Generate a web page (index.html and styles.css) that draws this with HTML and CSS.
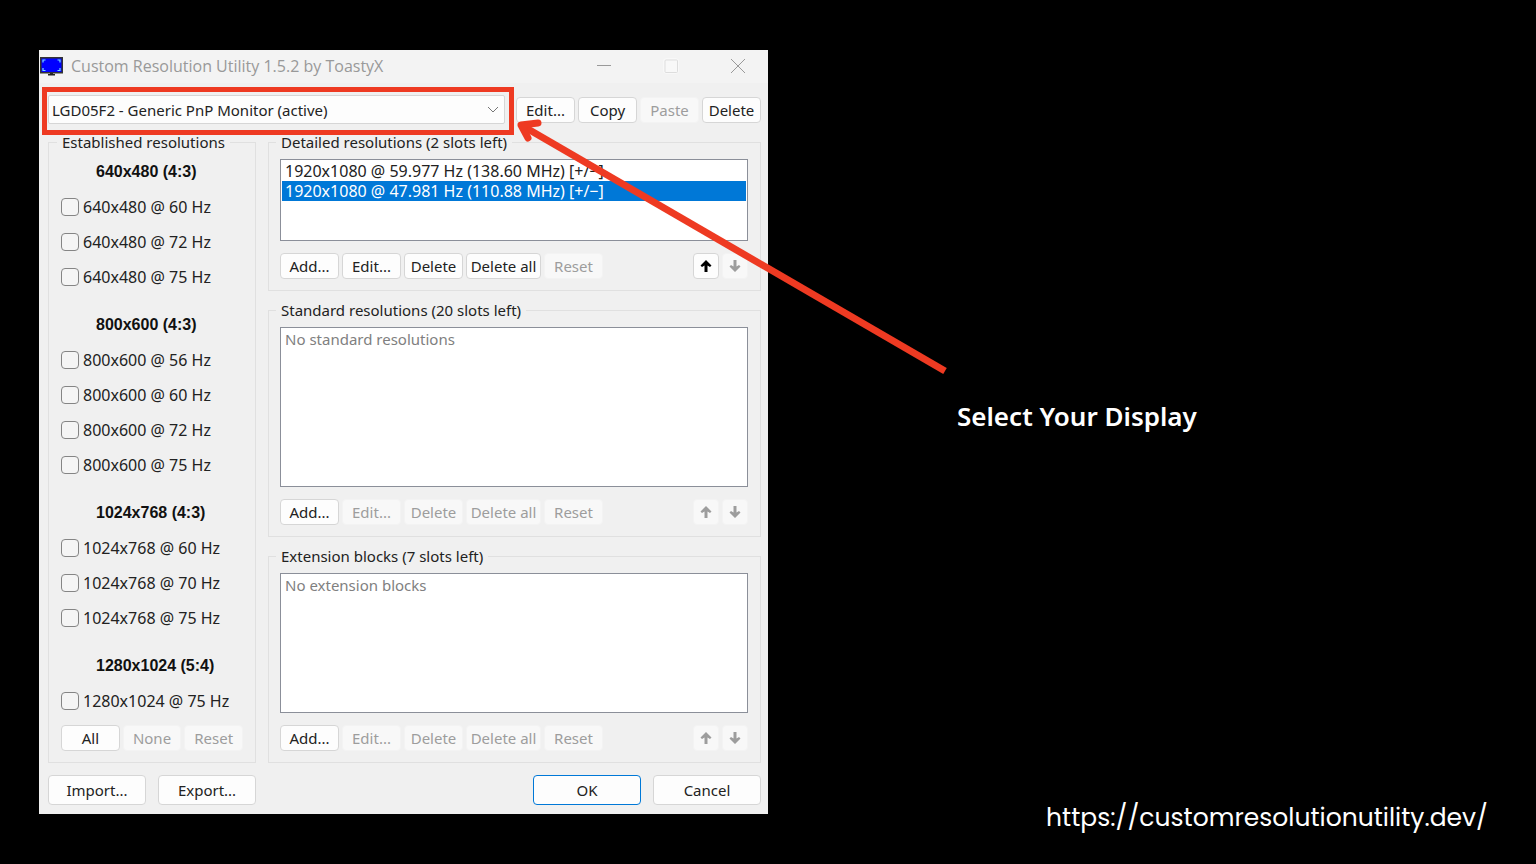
FILE: index.html
```html
<!DOCTYPE html>
<html lang="en">
<head>
    <meta charset="UTF-8">
    <meta name="viewport" content="width=device-width, initial-scale=1.0">
    <title>Custom Resolution Utility</title>
    <link rel="stylesheet" href="styles.css">
</head>
<body>
    <svg class="sprite" width="0" height="0" aria-hidden="true">
        <symbol id="icon-up" viewBox="0 0 12 14">
            <path d="M6 1 L11.500 6.500 L10 8 L7.500 6.500 V13 H4.500 V6.500 L2 8 L.5 6.500 Z"/>
        </symbol>
        <symbol id="icon-down" viewBox="0 0 12 14">
            <path d="M6 13 L11.500 7.500 L10 6 L7.500 7.500 V1 H4.500 V7.500 L2 6 L.5 7.500 Z"/>
        </symbol>
    </svg>

    <main class="window">
        <header class="titlebar">
            <svg class="app-icon" width="24" height="20" viewBox="0 0 24 20" aria-hidden="true">
                <path d="M11 16h3v2h2v1.500H9V18h2z" fill="#222"/>
                <rect x="1.750" y="1.750" width="21.500" height="15" fill="#00f" stroke="#333" stroke-width="1.500"/>
                <path d="M4 6.500V4H6.500M18.500 4H21V6.500M21 12v2.500H18.500M6.500 14.500H4V12" fill="none" stroke="#7df" stroke-width="1.200"/>
            </svg>
            <h1>Custom Resolution Utility 1.5.2 by ToastyX</h1>
            <div class="window-controls">
                <button type="button" aria-label="Minimize">
                    <svg width="16" height="16" viewBox="0 0 16 16"><path d="M1 7.500h14"/></svg>
                </button>
                <button type="button" aria-label="Maximize" disabled>
                    <svg width="16" height="16" viewBox="0 0 16 16"><rect x="2" y="2" width="12.500" height="12.500" rx="1"/></svg>
                </button>
                <button type="button" aria-label="Close">
                    <svg width="16" height="16" viewBox="0 0 16 16"><path d="M1 1l14 14M15 1L1 15"/></svg>
                </button>
            </div>
        </header>

        <form class="content">
            <div class="toolbar">
                <div class="display-picker">
                    <select aria-label="Display">
                        <option>LGD05F2 - Generic PnP Monitor (active)</option>
                    </select>
                    <svg class="chevron" width="12" height="8" viewBox="0 0 12 8" aria-hidden="true"><path d="M1 1l5 5 5-5"/></svg>
                    <div class="highlight"></div>
                    <svg class="arrow" width="450" height="290" viewBox="0 0 450 290" aria-hidden="true">
                        <path d="M440 276L16 30"/>
                        <path class="arrow-head" d="M33 28L16 30L23 43"/>
                    </svg>
                </div>
                <button type="button">Edit...</button>
                <button type="button">Copy</button>
                <button type="button" disabled>Paste</button>
                <button type="button">Delete</button>
            </div>

            <div class="panels">
                <fieldset class="established">
                    <legend>Established resolutions</legend>
                    <div class="mode-group">
                        <h2>640x480 (4:3)</h2>
                        <label><input type="checkbox"> 640x480 @ 60 Hz</label>
                        <label><input type="checkbox"> 640x480 @ 72 Hz</label>
                        <label><input type="checkbox"> 640x480 @ 75 Hz</label>
                    </div>
                    <div class="mode-group">
                        <h2>800x600 (4:3)</h2>
                        <label><input type="checkbox"> 800x600 @ 56 Hz</label>
                        <label><input type="checkbox"> 800x600 @ 60 Hz</label>
                        <label><input type="checkbox"> 800x600 @ 72 Hz</label>
                        <label><input type="checkbox"> 800x600 @ 75 Hz</label>
                    </div>
                    <div class="mode-group">
                        <h2>1024x768 (4:3)</h2>
                        <label><input type="checkbox"> 1024x768 @ 60 Hz</label>
                        <label><input type="checkbox"> 1024x768 @ 70 Hz</label>
                        <label><input type="checkbox"> 1024x768 @ 75 Hz</label>
                    </div>
                    <div class="mode-group">
                        <h2>1280x1024 (5:4)</h2>
                        <label><input type="checkbox"> 1280x1024 @ 75 Hz</label>
                    </div>
                    <div class="actions">
                        <button type="button">All</button>
                        <button type="button" disabled>None</button>
                        <button type="button" disabled>Reset</button>
                    </div>
                </fieldset>

                <div class="column">
                    <fieldset>
                        <legend>Detailed resolutions (2 slots left)</legend>
                        <ul class="list list-small">
                            <li>1920x1080 @ 59.977 Hz (138.60 MHz) [+/−]</li>
                            <li class="selected">1920x1080 @ 47.981 Hz (110.88 MHz) [+/−]</li>
                        </ul>
                        <div class="actions">
                            <button type="button">Add...</button>
                            <button type="button">Edit...</button>
                            <button type="button">Delete</button>
                            <button type="button" class="wide">Delete all</button>
                            <button type="button" disabled>Reset</button>
                            <div class="movers">
                                <button type="button" aria-label="Move up"><svg width="12" height="14"><use href="#icon-up"/></svg></button>
                                <button type="button" aria-label="Move down" disabled><svg width="12" height="14"><use href="#icon-down"/></svg></button>
                            </div>
                        </div>
                    </fieldset>

                    <fieldset>
                        <legend>Standard resolutions (20 slots left)</legend>
                        <ul class="list list-large">
                            <li class="empty">No standard resolutions</li>
                        </ul>
                        <div class="actions">
                            <button type="button">Add...</button>
                            <button type="button" disabled>Edit...</button>
                            <button type="button" disabled>Delete</button>
                            <button type="button" class="wide" disabled>Delete all</button>
                            <button type="button" disabled>Reset</button>
                            <div class="movers">
                                <button type="button" aria-label="Move up" disabled><svg width="12" height="14"><use href="#icon-up"/></svg></button>
                                <button type="button" aria-label="Move down" disabled><svg width="12" height="14"><use href="#icon-down"/></svg></button>
                            </div>
                        </div>
                    </fieldset>

                    <fieldset>
                        <legend>Extension blocks (7 slots left)</legend>
                        <ul class="list list-medium">
                            <li class="empty">No extension blocks</li>
                        </ul>
                        <div class="actions">
                            <button type="button">Add...</button>
                            <button type="button" disabled>Edit...</button>
                            <button type="button" disabled>Delete</button>
                            <button type="button" class="wide" disabled>Delete all</button>
                            <button type="button" disabled>Reset</button>
                            <div class="movers">
                                <button type="button" aria-label="Move up" disabled><svg width="12" height="14"><use href="#icon-up"/></svg></button>
                                <button type="button" aria-label="Move down" disabled><svg width="12" height="14"><use href="#icon-down"/></svg></button>
                            </div>
                        </div>
                    </fieldset>
                </div>
            </div>

            <div class="footer">
                <button type="button" class="file">Import...</button>
                <button type="button" class="file">Export...</button>
                <button type="submit" class="dialog primary">OK</button>
                <button type="button" class="dialog">Cancel</button>
            </div>
        </form>
    </main>

    <aside class="notes">
        <p class="caption">Select Your Display</p>
        <a class="site" href="https://customresolutionutility.dev/">https://customresolutionutility.dev/</a>
    </aside>
</body>
</html>
```
FILE: styles.css
```css
* {
    box-sizing: border-box;
}

body {
    margin: 0;
    min-height: 100vh;
    padding: 50px 39px 30px;
    display: grid;
    grid-template-columns: 1fr 1fr;
    align-items: start;
    background-color: #000;
    font-family: "Noto Sans", Tahoma, sans-serif;
    font-size: 15px;
    color: #222;
}

.sprite {
    position: absolute;
}

.window {
    background-color: #f0f0f0;
}

/* Title bar */
.titlebar {
    display: flex;
    align-items: center;
    height: 33px;
    padding-bottom: 2px;
    background-color: #f3f3f3;
}

.titlebar h1 {
    margin: 0 0 0 8px;
    font-family: "Open Sans", sans-serif;
    font-size: 16px;
    font-weight: normal;
    color: #999;
}

.window-controls {
    display: flex;
    gap: 51px;
    margin-left: auto;
    padding-right: 22px;
}

.window-controls button {
    width: 16px;
    height: 16px;
    padding: 0;
    border: none;
    background: none;
}

.window-controls svg {
    display: block;
    fill: none;
    stroke: #999;
}

.window-controls button:disabled svg {
    stroke: #ddd;
}

.content {
    padding: 12px 7px 9px 9px;
}

button {
    height: 26px;
    width: 59px;
    padding: 0;
    border: 1px solid #d6d6d6;
    border-radius: 4px;
    background-color: #fdfdfd;
    font: inherit;
    line-height: 20px;
    color: #222;
    white-space: nowrap;
}

button:disabled {
    border-color: #f3f3f3;
    background-color: #f8f8f8;
    color: #9d9d9d;
}

/* Display selection */
.toolbar {
    display: flex;
    align-items: center;
    gap: 3px;
    margin-bottom: 8px;
}

.display-picker {
    position: relative;
    flex: 1;
    margin-right: 8px;
}

.display-picker select {
    display: block;
    width: 100%;
    height: 29px;
    padding: 0 30px 0 3px;
    border: 1px solid #d6d6d6;
    border-radius: 2px;
    background-color: #fdfdfd;
    font: inherit;
    color: #222;
    appearance: none;
}

.chevron {
    position: absolute;
    top: 11px;
    right: 6px;
    fill: none;
    stroke: #777;
    pointer-events: none;
}

.highlight {
    position: absolute;
    inset: -8px -9px -11px -6px;
    border: 5px solid #ee3a22;
    z-index: 1;
    pointer-events: none;
}

.arrow {
    position: absolute;
    top: 0;
    left: 100%;
    z-index: 2;
    fill: none;
    stroke: #ee3a22;
    stroke-width: 7;
    pointer-events: none;
}

.arrow-head {
    stroke-linecap: round;
    stroke-linejoin: round;
}

/* Group boxes */
.panels {
    display: grid;
    grid-template-columns: 208px 1fr;
    gap: 12px;
}

.column {
    display: flex;
    flex-direction: column;
    gap: 9px;
    min-width: 0;
}

fieldset {
    min-width: 0;
    margin: 0;
    padding: 7px 12px 11px 11px;
    border: 1px solid #e0e0e0;
}

legend {
    margin-left: -4px;
    padding: 0 5px;
    line-height: 20px;
}

.established {
    display: flex;
    flex-direction: column;
    gap: 13px;
    padding-top: 2px;
    padding-left: 12px;
}

.established .actions {
    margin-top: -6px;
}

.mode-group h2 {
    margin: 0;
    padding-left: 35px;
    font-family: "Liberation Sans", Arial, sans-serif;
    font-size: 16px;
    line-height: 35px;
    color: #111;
}

.mode-group label {
    display: flex;
    align-items: center;
    gap: 4px;
    height: 35px;
    font-size: 16px;
}

.mode-group input {
    appearance: none;
    width: 18px;
    height: 18px;
    margin: 0;
    border: 1px solid #858585;
    border-radius: 4px;
    background-color: #f5f5f5;
}

.mode-group input:checked {
    background-color: #0078d7;
}

.list {
    margin: 0 0 12px;
    padding: 1px;
    border: 1px solid #8b8f99;
    background-color: #fff;
    font-size: 16px;
    list-style: none;
}

.list-small {
    min-height: 82px;
}

.list-medium {
    min-height: 140px;
}

.list-large {
    min-height: 160px;
}

.list li {
    padding: 0 3px;
    line-height: 20px;
}

.list .selected {
    background-color: #0078d7;
    color: #fff;
}

.list .empty {
    font-size: 15px;
    color: #808080;
}

.actions {
    display: flex;
    gap: 3px;
}

.actions .wide {
    width: 75px;
}

.movers {
    display: flex;
    gap: 3px;
    margin-left: auto;
}

.movers button {
    display: flex;
    align-items: center;
    justify-content: center;
    width: 26px;
}

.movers svg {
    fill: #000;
}

.movers button:disabled svg {
    fill: #9d9d9d;
}

/* Dialog buttons */
.footer {
    display: flex;
    gap: 12px;
    margin-top: 12px;
}

.footer button {
    height: 30px;
}

.footer .file {
    width: 98px;
}

.footer .dialog {
    width: 108px;
}

.footer .primary {
    margin-left: auto;
    border-color: #0078d7;
}

/* Notes beside the window */
.notes {
    display: flex;
    flex-direction: column;
    justify-content: space-between;
    align-self: stretch;
    padding: 350px 9px 0 189px;
    color: #fff;
}

.caption {
    margin: 0;
    font-size: 26px;
    font-weight: 600;
    line-height: 32px;
}

.site {
    align-self: flex-end;
    font-family: Poppins, Inter, sans-serif;
    font-size: 25px;
    line-height: 32px;
    color: #fff;
    text-decoration: none;
}
```
